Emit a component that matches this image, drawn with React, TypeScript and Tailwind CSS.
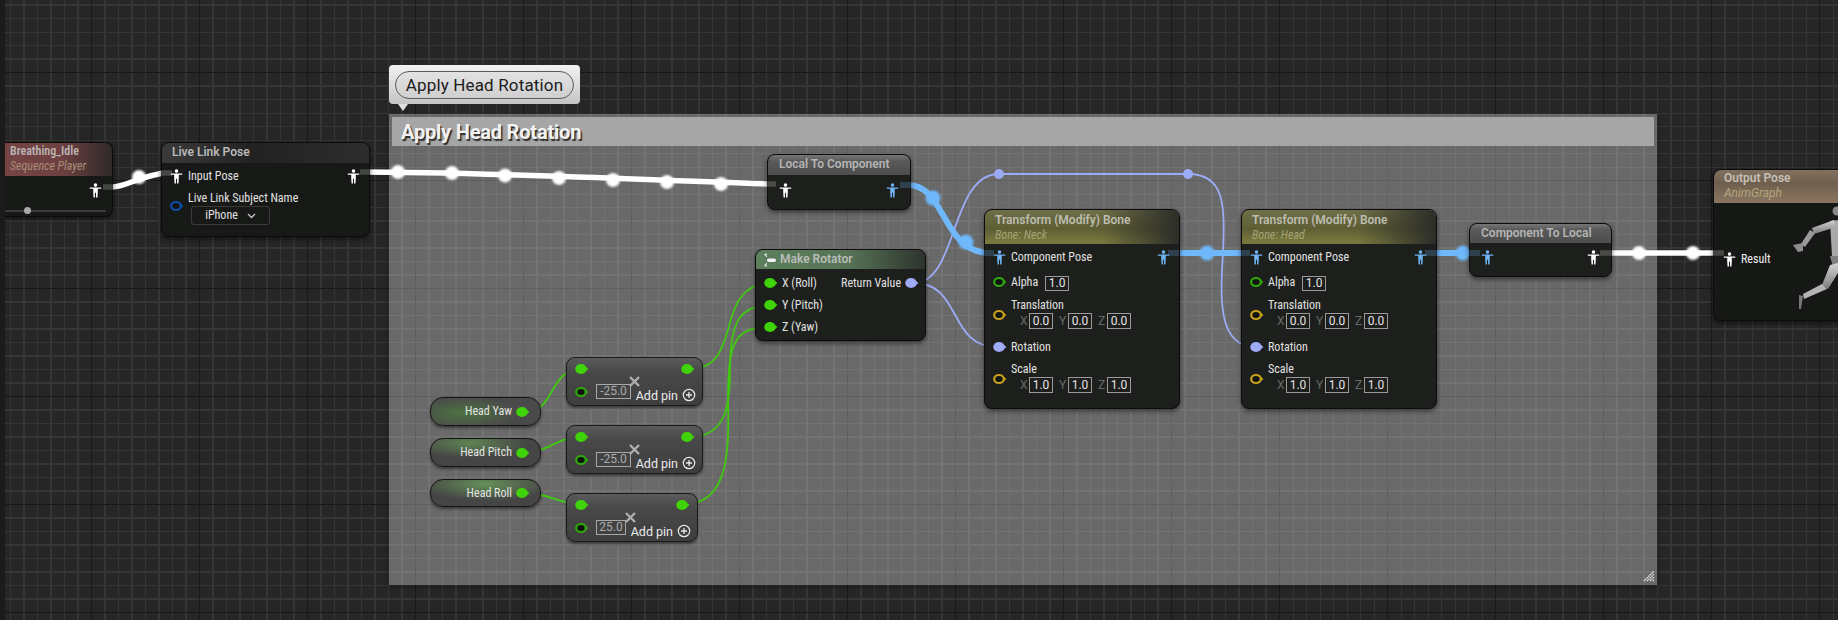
import React from "react";

const FONT = "font-['Roboto',sans-serif]";
const LABEL = "text-[12px] leading-[15px] text-[#e2e2e2] [font-stretch:81%]";
const TITLE = "text-[12px] font-semibold leading-[15px] [font-stretch:88%]";
const SUB = "text-[12px] italic leading-[15px] [font-stretch:75%]";

function Pose({ color = "#fff", className = "" }: { color?: string; className?: string }) {
  return (
    <svg width="13" height="15" viewBox="0 0 14 17" className={`shrink-0 ${className}`}>
      <circle cx="7" cy="2.4" r="2" fill={color} />
      <path d="M0.5 5h13v1.6H9.6V10.500l-.4 6H7.600V11h-1.200v5.500H4.800l-.4-6V6.600H.5z" fill={color} />
    </svg>
  );
}

function Pin({ color, hollow = false, className = "" }: { color: string; hollow?: boolean; className?: string }) {
  return (
    <svg width="14" height="12" viewBox="0 0 14 12" className={`shrink-0 ${className}`}>
      <path d="M10.500 3.800L13.500 6l-3 2.200z" fill={color} />
      {hollow ? (
        <ellipse cx="6" cy="6" rx="4.800" ry="4" fill="#10140f" stroke={color} strokeWidth="2.200" />
      ) : (
        <ellipse cx="6" cy="6" rx="5.800" ry="5.100" fill={color} />
      )}
    </svg>
  );
}

function Box({ v, w = "w-6", h = "h-4" }: { v: string; w?: string; h?: string }) {
  return (
    <span className={`${w} ${h} inline-flex items-center justify-center border border-[#9a9a9a] text-[12px] [font-stretch:88%] leading-none text-[#e4e4e4]`}>
      {v}
    </span>
  );
}

function Vector({ vals }: { vals: string[] }) {
  return (
    <div className="flex items-center ml-[9px] h-4">
      {["X", "Y", "Z"].map((a, i) => (
        <span key={a} className="flex items-center">
          <span className={`text-[12px] [font-stretch:88%] text-[#666a66] ${i ? "ml-[6px]" : ""} w-[9px]`}>{a}</span>
          <Box v={vals[i]} />
        </span>
      ))}
    </div>
  );
}

function TransformNode({ name, left }: { name: string; left: string }) {
  return (
    <div className={`absolute top-[209px] ${left} w-[196px] h-[200px] rounded-lg border border-[#0c0c0c] bg-[#1d1f1c] shadow-[0_2px_5px_rgba(0,0,0,0.55)] overflow-hidden`}>
      <div className="h-[34px] pl-[10px] pt-[3px] bg-[linear-gradient(180deg,#6f6f49_0%,#5e5e34_55%,#77773e_92%)] relative">
        <div className="absolute inset-0 bg-[linear-gradient(90deg,transparent_60%,#2c2d28_100%)]" />
        <div className={`relative ${TITLE} text-[#bdbdb0]`}>Transform (Modify) Bone</div>
        <div className={`relative ${SUB} text-[#a3a374]`}>{name}</div>
      </div>
      <div className="flex items-center justify-between pl-[8px] pr-[9px] h-[26px]">
        <span className="flex items-center gap-[5px]"><Pose color="#6fb3f0" /><span className={LABEL}>Component Pose</span></span>
        <Pose color="#6fb3f0" />
      </div>
      <div className="flex items-center pl-[8px] h-[24px]">
        <Pin color="#2fa80e" hollow /><span className={`ml-[4px] ${LABEL}`}>Alpha</span>
        <span className="ml-[7px]"><Box v="1.0" h="h-[15px]" /></span>
      </div>
      <div className="flex pl-[8px] h-[31px] mt-[4px]">
        <Pin color="#c9a01e" hollow className="mt-[11px]" />
        <div className="ml-[4px]">
          <div className={LABEL}>Translation</div>
          <Vector vals={["0.0", "0.0", "0.0"]} />
        </div>
      </div>
      <div className="flex items-center pl-[8px] h-[28px] mt-[4px]">
        <Pin color="#9fabf7" /><span className={`ml-[4px] ${LABEL}`}>Rotation</span>
      </div>
      <div className="flex pl-[8px] h-[31px] mt-[1px]">
        <Pin color="#c9a01e" hollow className="mt-[11px]" />
        <div className="ml-[4px]">
          <div className={LABEL}>Scale</div>
          <Vector vals={["1.0", "1.0", "1.0"]} />
        </div>
      </div>
    </div>
  );
}

function VarNode({ name, top, bg }: { name: string; top: string; bg: string }) {
  return (
    <div className={`absolute left-[430px] ${top} w-[111px] rounded-[13px] border border-[#141414] ${bg} shadow-[0_2px_3px_rgba(0,0,0,0.45)] flex items-center justify-end pr-[10px] gap-[4px]`}>
      <span className={LABEL}>{name}</span>
      <Pin color="#3fd40a" />
    </div>
  );
}

function AddNode({ top, left = "left-[566px]", w, val, boxW, xLeft }: { top: string; left?: string; w: string; val: string; boxW: string; xLeft: string }) {
  return (
    <div className={`absolute ${left} ${top} ${w} h-[49px] rounded-[9px] border border-[#1a1a1a] bg-[linear-gradient(180deg,#5b5b5b_0%,#484848_30%,#3e3e3e_100%)] shadow-[0_2px_3px_rgba(0,0,0,0.45)] pl-[8px] pr-[7px]`}>
      <div className="flex justify-between items-center h-[12px] mt-[5px]">
        <Pin color="#3fd40a" />
        <Pin color="#3fd40a" />
      </div>
      <div className="flex items-center mt-[9px]">
        <Pin color="#2fa80e" hollow />
        <span className={`ml-[7px] ${boxW} h-[15px] border border-[#a8a8a8] text-[12px] [font-stretch:92%] leading-[13px] text-center text-[#aaaaaa]`}>{val}</span>
      </div>
      <span className="absolute right-[24px] bottom-[2px] text-[12.500px] leading-[15px] text-[#eaeaea]">Add pin</span>
      <svg width="14" height="14" viewBox="0 0 14 14" className="absolute right-[6px] bottom-[3px]">
        <circle cx="7" cy="7" r="5.700" fill="none" stroke="#e8e8e8" strokeWidth="1.200" />
        <path d="M4 7h6M7 4v6" stroke="#e8e8e8" strokeWidth="1.300" />
      </svg>
      <svg width="11" height="11" viewBox="0 0 11 11" className={`absolute ${xLeft} top-[18px]`}>
        <path d="M1 1l9 9M10 1l-9 9" stroke="#aeaeae" strokeWidth="2.400" />
      </svg>
    </div>
  );
}

export default function App() {
  const titleGray = "bg-[linear-gradient(180deg,#767676_0%,#5a5a5a_30%,#4d4d4d_100%)]";
  return (
    <div className={`${FONT} relative w-[1838px] h-[620px] overflow-hidden bg-[#262626]`}>
      {/* graph grid */}
      <div className="absolute inset-0 bg-[repeating-linear-gradient(90deg,transparent_0,transparent_10px,#353535_10px,#353535_11.200px,transparent_11.200px,transparent_13.500px)]" />
      <div className="absolute inset-0 bg-[repeating-linear-gradient(180deg,transparent_0,transparent_4.500px,#353535_4.500px,#353535_5.700px,transparent_5.700px,transparent_13.500px)]" />
      <div className="absolute inset-0 bg-[repeating-linear-gradient(90deg,transparent_0,transparent_91px,#1a1a1a_91px,#1a1a1a_92px,transparent_92px,transparent_108px)]" />
      <div className="absolute inset-0 bg-[repeating-linear-gradient(180deg,transparent_0,transparent_72px,#181818_72px,#181818_73px,transparent_73px,transparent_108px)]" />

      {/* comment box */}
      <div className="absolute left-[389px] top-[114px] w-[1268px] h-[471px] bg-[rgba(255,255,255,0.31)] shadow-[0_1px_4px_rgba(0,0,0,0.5)] pl-[3px] pt-[3px] pr-[3px]">
        <div className="h-[29px] bg-[#a6a6a6] pl-[9px] text-[20px] font-bold leading-[30px] tracking-[-0.2px] text-[#f2f2f2] [text-shadow:1.500px_1.500px_1px_#2a2a2a]">
          Apply Head Rotation
        </div>
        <svg width="12" height="12" viewBox="0 0 12 12" className="absolute right-[2px] bottom-[3px]">
          <path d="M1 11L11 1M4 11l7-7M7 11l4-4M10 11l1-1" stroke="#e8e8e8" strokeWidth="1.200" strokeDasharray="1.500 0.500" fill="none" />
        </svg>
      </div>

      {/* comment bubble */}
      <div className="absolute left-[389px] top-[65px] w-[191px] h-[39px] rounded-[4px] bg-[linear-gradient(180deg,#f2f2f2_0%,#dcdcdc_50%,#c4c4c4_100%)] p-[6px] pb-[5px]">
        <div className="h-[28px] rounded-[14px] border border-[#5a5a5a] bg-[linear-gradient(180deg,#e2e2e2_0%,#cfcfcf_100%)] text-center text-[17px] leading-[26px] tracking-[0.15px] text-[#1c1c1c]">
          Apply Head Rotation
        </div>
        <div className="absolute left-[9px] top-full w-0 h-0 border-x-[5px] border-x-transparent border-t-[7px] border-t-[#e0e0e0]" />
      </div>

      {/* wires under the nodes */}
      <svg width="1838" height="620" className="absolute left-0 top-0" fill="none">
        <g stroke="#3fc90f" strokeWidth="1.800">
          <path d="M525 412C556 412 548 369 582 369" />
          <path d="M525 452C550 452 556 437 582 437" />
          <path d="M525 493C550 493 556 504 582 504" />
          <path d="M690 369C716 369 722 350 728 330C735 300 745 283 772 283" />
          <path d="M690 437C728 437 730 400 730 370C730 320 740 305 772 305" />
          <path d="M685 504C735 504 728 430 728 400C728 340 735 327 772 327" />
        </g>
        <g stroke="#9cabf5" strokeWidth="1.800">
          <path d="M914 283C958 283 950 174 999 174H1188C1225 174 1225 205 1223 253C1220 300 1218 347 1256 347" />
          <path d="M914 283C962 283 948 347 997 347" />
        </g>
        <g fill="#9cabf5">
          <circle cx="999" cy="174" r="5" />
          <circle cx="1188" cy="174" r="5" />
        </g>
        <g stroke="#fff" strokeWidth="5.500">
          <path d="M112 187C126 187 138 176 170 172" />
          <path d="M360 172C480 172 600 178 772 184" />
          <path d="M1600 253H1725" />
        </g>
        <g fill="#fff" className="blur-[0.8px]">
          <circle cx="139" cy="177" r="7" />
          {[[398, 172], [452, 173], [505, 175.500], [559, 178], [613, 180], [667, 182], [721, 184], [1639, 253], [1693, 253]].map(([x, y]) => (
            <circle key={x} cx={x} cy={y} r="7" />
          ))}
        </g>
        <g stroke="#6fb8fb" strokeWidth="6">
          <path d="M908 185C946 185 942 253 990 253" />
          <path d="M1170 253H1245" />
          <path d="M1425 253H1475" />
        </g>
        <g fill="#6fb8fb" className="blur-[0.8px]">
          <circle cx="933" cy="198" r="7.500" />
          <circle cx="966" cy="242" r="7.500" />
          <circle cx="1207" cy="253" r="7.500" />
          <circle cx="1463" cy="253" r="7.500" />
        </g>
      </svg>

      {/* left edge of the view */}
      <div className="absolute left-0 top-0 w-[5px] h-full bg-[#1b1b1b] z-10" />

      {/* Breathing_Idle */}
      <div className="absolute left-[5px] top-[142px] w-[108px] h-[75px] rounded-r-lg border border-l-0 border-[#0c0c0c] bg-[#171917] shadow-[0_2px_5px_rgba(0,0,0,0.55)] overflow-hidden">
        <div className="h-[33px] pl-[5px] pt-[1px] bg-[linear-gradient(90deg,#764444_0%,#6d4040_55%,#2f2a2a_100%)]">
          <div className="text-[12px] font-semibold leading-[15px] [font-stretch:80%] text-[#b9b2b2]">Breathing_Idle</div>
          <div className={`${SUB} text-[#a88e78]`}>Sequence Player</div>
        </div>
        <div className="flex justify-end pr-[10px] mt-[7px]"><Pose /></div>
        <div className="relative mt-[12px] h-[2px] mr-[6px] bg-[#3d3d3d]">
          <span className="absolute left-[19px] top-[-3px] w-[7px] h-[7px] rounded-full bg-[#a8a8a8]" />
        </div>
      </div>

      {/* Live Link Pose */}
      <div className="absolute left-[161px] top-[142px] w-[209px] h-[95px] rounded-lg border border-[#0c0c0c] bg-[#171917] shadow-[0_2px_5px_rgba(0,0,0,0.55)] overflow-hidden">
        <div className={`h-[20px] pl-[10px] pt-[2px] bg-[linear-gradient(90deg,#3a3a3a_0%,#222_45%,#2d2d2d_100%)] ${TITLE} text-[#b9b9b9]`}>Live Link Pose</div>
        <div className="flex items-center justify-between pl-[8px] pr-[9px] h-[25px] mt-[1px]">
          <span className="flex items-center gap-[5px]"><Pose /><span className={LABEL}>Input Pose</span></span>
          <Pose />
        </div>
        <div className="flex pl-[8px] mt-[2px]">
          <Pin color="#0c4fa8" hollow className="mt-[9px]" />
          <div className="ml-[4px]">
            <div className={LABEL}>Live Link Subject Name</div>
            <div className={`ml-[3px] w-[79px] h-[19px] rounded-[3px] border border-[#3b3b3b] flex items-center justify-center gap-[9px] ${LABEL}`}>
              iPhone
              <svg width="9" height="6" viewBox="0 0 9 6" fill="none"><path d="M1 1l3.500 3.500L8 1" stroke="#c8c8c8" strokeWidth="1.300" /></svg>
            </div>
          </div>
        </div>
      </div>

      {/* Local To Component */}
      <div className="absolute left-[767px] top-[154px] w-[144px] h-[56px] rounded-lg border border-[#0c0c0c] bg-[#1d1f1c] shadow-[0_2px_5px_rgba(0,0,0,0.55)] overflow-hidden">
        <div className={`h-[20px] pl-[11px] pt-[2px] ${titleGray} ${TITLE} text-[#b5b5b5]`}>Local To Component</div>
        <div className="flex items-center justify-between px-[11px] mt-[8px]">
          <Pose />
          <Pose color="#6fb3f0" />
        </div>
      </div>

      {/* Component To Local */}
      <div className="absolute left-[1469px] top-[223px] w-[143px] h-[54px] rounded-lg border border-[#0c0c0c] bg-[#1d1f1c] shadow-[0_2px_5px_rgba(0,0,0,0.55)] overflow-hidden">
        <div className={`h-[19px] pl-[11px] pt-[2px] ${titleGray} ${TITLE} text-[#b5b5b5]`}>Component To Local</div>
        <div className="flex items-center justify-between px-[11px] mt-[7px]">
          <Pose color="#6fb3f0" />
          <Pose />
        </div>
      </div>

      {/* Make Rotator */}
      <div className="absolute left-[755px] top-[249px] w-[171px] h-[92px] rounded-lg border border-[#0c0c0c] bg-[#1d1f1c] shadow-[0_2px_5px_rgba(0,0,0,0.55)] overflow-hidden">
        <div className="h-[19px] pl-[7px] flex items-center gap-[3px] bg-[linear-gradient(90deg,#5c7f5c_0%,#567356_55%,#2d332d_100%)]">
          <svg width="14" height="14" viewBox="0 0 14 14" fill="none">
            <rect x="4" y="5.500" width="9" height="3.500" rx="1.700" fill="#f0f0f0" />
            <path d="M1 1l3 3M1 13l3-3M3.800 2.500L2.500 1H4M3.800 11.500L2.500 13H4" stroke="#e8e8e8" strokeWidth="1" />
          </svg>
          <span className={`${TITLE} text-[#b9bdb9]`}>Make Rotator</span>
        </div>
        <div className="flex justify-between pl-[8px] pr-[6px] pt-[6px]">
          <div className="flex flex-col gap-[6px]">
            {["X (Roll)", "Y (Pitch)", "Z (Yaw)"].map((t) => (
              <span key={t} className={`flex items-center gap-[4px] h-[16px] ${LABEL}`}><Pin color="#3fd40a" />{t}</span>
            ))}
          </div>
          <span className={`flex items-center gap-[4px] h-[16px] ${LABEL}`}>Return Value<Pin color="#9fabf7" /></span>
        </div>
      </div>

      <TransformNode name="Bone: Neck" left="left-[984px]" />
      <TransformNode name="Bone: Head" left="left-[1241px]" />

      <VarNode name="Head Yaw" top="top-[397px] h-[29px]" bg="bg-[radial-gradient(ellipse_50%_60%_at_30%_55%,#4d7340_0%,#4a4a4a_100%)]" />
      <VarNode name="Head Pitch" top="top-[438px] h-[29px]" bg="bg-[radial-gradient(ellipse_55%_55%_at_35%_15%,#5f8553_0%,#454545_100%)]" />
      <VarNode name="Head Roll" top="top-[479px] h-[28px]" bg="bg-[radial-gradient(ellipse_60%_65%_at_50%_15%,#659158_0%,#454545_100%)]" />

      <AddNode top="top-[357px]" w="w-[137px]" val="-25.0" boxW="w-[35px]" xLeft="left-[62px]" />
      <AddNode top="top-[425px]" w="w-[137px]" val="-25.0" boxW="w-[35px]" xLeft="left-[62px]" />
      <AddNode top="top-[493px]" w="w-[132px]" val="25.0" boxW="w-[30px]" xLeft="left-[58px]" />

      {/* Output Pose */}
      <div className="absolute left-[1713px] top-[169px] w-[140px] h-[152px] rounded-l-lg border border-[#0c0c0c] bg-[#161815] shadow-[0_2px_5px_rgba(0,0,0,0.55)] overflow-hidden">
        <div className="h-[33px] pl-[10px] pt-[1px] bg-[linear-gradient(180deg,#83715f_0%,#6f5f4e_40%,#8a7661_100%)]">
          <div className={`${TITLE} text-[#c4c0b8]`}>Output Pose</div>
          <div className="text-[12px] italic leading-[15px] [font-stretch:88%] text-[#b5a67c]">AnimGraph</div>
        </div>
        <div className="flex items-center gap-[5px] pl-[9px] mt-[49px]">
          <Pose />
          <span className={`${LABEL} text-[#f0f0f0]`}>Result</span>
        </div>
        <svg width="60" height="120" viewBox="1778 200 60 120" className="absolute left-[64px] top-[31px]">
          <defs>
            <linearGradient id="limb" x1="0" y1="0" x2="0" y2="1">
              <stop offset="0" stopColor="#d4d4d4" />
              <stop offset="1" stopColor="#7c7c7c" />
            </linearGradient>
          </defs>
          <circle cx="1837" cy="210" r="4.500" fill="#8a8a8a" />
          <path d="M1830 220L1838 219V255H1832z" fill="#a9a9a9" />
          <path d="M1830 255H1838V266L1833 266z" fill="#7f7f7f" />
          <path d="M1834 219L1812 227L1814 233L1836 226z" fill="url(#limb)" />
          <path d="M1810 229L1815 232L1805 246L1801 243z" fill="#9a9a9a" />
          <path d="M1793 244L1803 242L1803 250L1798 251z" fill="#8e8e8e" />
          <path d="M1830 264L1838 262L1838 272L1828 288L1822 284z" fill="url(#limb)" />
          <path d="M1822 283L1827 288L1804 298L1803 293z" fill="#b4b4b4" />
          <path d="M1799 294L1803 295L1801 308L1799 308z" fill="#777" />
        </svg>
      </div>

      {/* wire ends seen through the nodes */}
      <svg width="1838" height="620" className="absolute left-0 top-0 pointer-events-none" fill="none">
        <g stroke="#fff" strokeOpacity="0.2" strokeWidth="5.500">
          <path d="M103 187H113" />
          <path d="M161 173H172" />
          <path d="M360 172H370" />
          <path d="M767 184H776" />
          <path d="M1600 253H1612" />
          <path d="M1713 253H1724" />
        </g>
        <g stroke="#6fb8fb" strokeOpacity="0.22" strokeWidth="6">
          <path d="M900 185H911" />
          <path d="M984 253H994" />
          <path d="M1168 253H1179" />
          <path d="M1241 253H1250" />
          <path d="M1425 253H1437" />
          <path d="M1469 253H1480" />
        </g>
      </svg>
    </div>
  );
}
